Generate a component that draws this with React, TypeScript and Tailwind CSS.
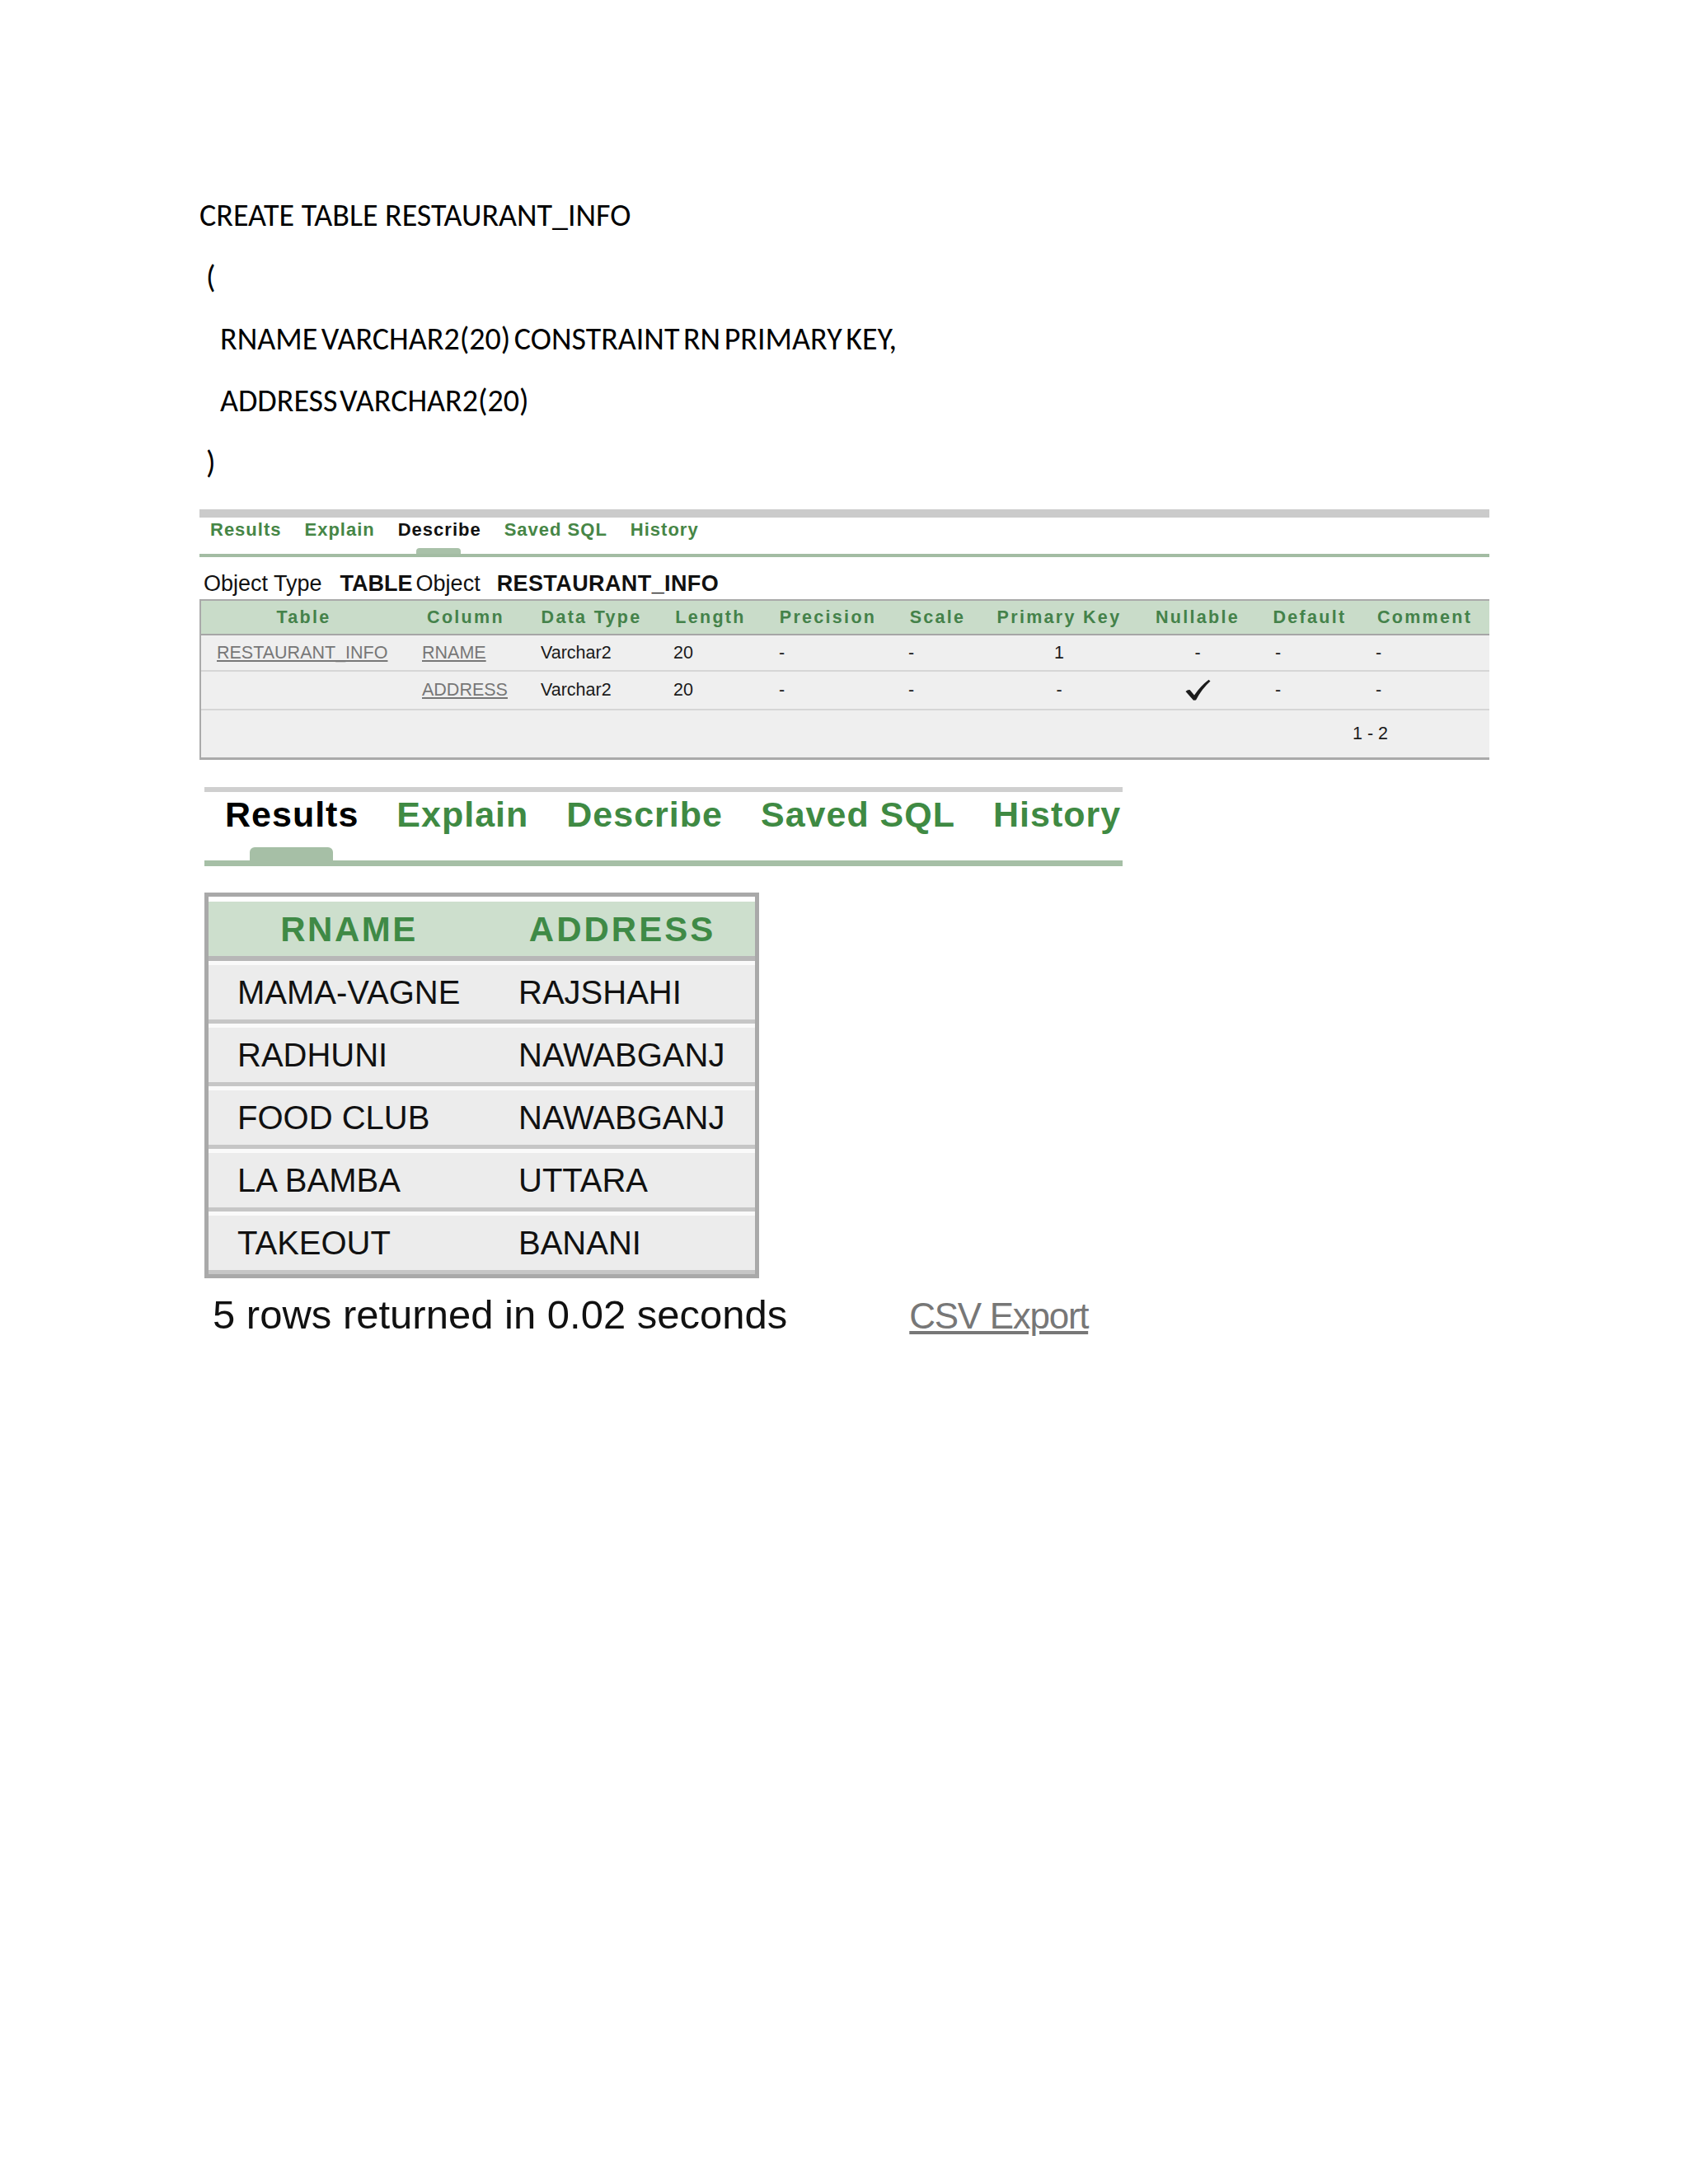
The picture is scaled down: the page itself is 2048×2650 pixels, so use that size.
import React from 'react';

const sans = "font-['Liberation_Sans',Arial,sans-serif]";
const calibri = 'font-[Carlito,Calibri,Lato,sans-serif]';
const descCols = 'grid grid-cols-[249px_144px_161px_128px_157px_109px_186px_150px_122px_157px]';

const describeHead = ['Table', 'Column', 'Data Type', 'Length', 'Precision', 'Scale', 'Primary Key', 'Nullable', 'Default', 'Comment'];

type DescRow = { table: string; column: string; type: string; length: string; pk: string; nullable: boolean };

const descRows: DescRow[] = [
  { table: 'RESTAURANT_INFO', column: 'RNAME', type: 'Varchar2', length: '20', pk: '1', nullable: false },
  { table: '', column: 'ADDRESS', type: 'Varchar2', length: '20', pk: '-', nullable: true },
];

const resultRows = [
  ['MAMA-VAGNE', 'RAJSHAHI'],
  ['RADHUNI', 'NAWABGANJ'],
  ['FOOD CLUB', 'NAWABGANJ'],
  ['LA BAMBA', 'UTTARA'],
  ['TAKEOUT', 'BANANI'],
];

const tabs = ['Results', 'Explain', 'Describe', 'Saved SQL', 'History'];

// heavy hand-drawn style tick used in the Nullable column
const Check = () => (
  <svg width="31" height="27" viewBox="0 0 31 27" className="block">
    <path
      d="M0.5 15 Q3 12.5 5.5 13 L11 19.5 Q18.5 8.5 28.5 0.8 L30.5 2.6 Q20.5 11.5 13 25.5 L10 25.8 Z"
      fill="#1c1c1c"
    />
  </svg>
);

const DescribePanel = () => (
  <div className={`w-[1565px] ${sans}`}>
    <div className="h-[10px] bg-[#cbcbcb]" />
    <div className="flex gap-[28px] whitespace-nowrap pl-[13px] pt-[3px] text-[22px] font-bold leading-[24px] tracking-[1px]">
      {tabs.map((t) => (
        <span key={t} className={t === 'Describe' ? 'text-[#111]' : 'text-[#468646]'}>
          {t}
        </span>
      ))}
    </div>
    <div className="flex h-[17px] items-end">
      <div className="ml-[263px] h-[7px] w-[54px] rounded-t-[4px] bg-[#a9c1a9]" />
    </div>
    <div className="h-[4px] bg-[#a3bca3]" />

    <div className="mt-[17px] flex pl-[5px] text-[27px] leading-[30px] text-[#111]">
      <span>Object Type</span>
      <span className="ml-[22px] font-bold">TABLE</span>
      <span className="ml-[4px]">Object</span>
      <span className="ml-[20px] font-bold tracking-[0.4px]">RESTAURANT_INFO</span>
    </div>

    <div className="mt-[4px] border-t-2 border-b-[3px] border-l-2 border-[#aaaaaa] text-[21.5px]">
      <div className={`${descCols} h-[42px] items-center border-b-2 border-[#a6a6a6] bg-[#c9dcc9]`}>
        {describeHead.map((h) => (
          <div key={h} className="text-center font-bold tracking-[2.3px] text-[#44824a]">
            {h}
          </div>
        ))}
      </div>
      {descRows.map((r, i) => (
        <div
          key={r.column}
          className={`${descCols} ${i === 0 ? 'h-[44px]' : 'h-[47px]'} items-center border-b-2 border-[#d6d6d6] bg-[#efefef] text-[#1a1a1a]`}
        >
          <div className="pl-[19px] text-[#777] underline">{r.table}</div>
          <div className="pl-[19px] text-[#777] underline">{r.column}</div>
          <div className="pl-[19px]">{r.type}</div>
          <div className="pl-[19px]">{r.length}</div>
          <div className="pl-[19px]">-</div>
          <div className="pl-[19px]">-</div>
          <div className="text-center">{r.pk}</div>
          <div className="flex justify-center">{r.nullable ? <Check /> : '-'}</div>
          <div className="pl-[19px]">-</div>
          <div className="pl-[19px]">-</div>
        </div>
      ))}
      <div className="flex h-[57px] items-center bg-[#efefef] pl-[1397px] text-[#1a1a1a]">1 - 2</div>
    </div>
  </div>
);

const ResultsPanel = () => (
  <div className={`mt-[33px] ml-[6px] ${sans}`}>
    <div className="w-[1114px]">
      <div className="h-[6px] bg-[#cfcfcf]" />
      <div className="flex gap-[46px] whitespace-nowrap pl-[25px] pt-[3px] text-[43px] font-bold leading-[48px] tracking-[1px]">
        {tabs.map((t) => (
          <span key={t} className={`shrink-0 ${t === 'Results' ? 'text-black' : 'text-[#3f8a43]'}`}>
            {t}
          </span>
        ))}
      </div>
      <div className="flex h-[32px] items-end">
        <div className="ml-[55px] h-[16px] w-[101px] rounded-t-[6px] bg-[#a6bfa6]" />
      </div>
      <div className="h-[7px] bg-[#a6bfa6]" />
    </div>

    <div className="mt-[32px] w-[673px] border-[5px] border-[#a9a9a9] bg-white">
      <div className="grid h-[78px] grid-cols-[341px_322px] items-center border-t-[6px] border-b-[6px] border-t-white border-b-[#b7b7b7] bg-[#cddfcd] text-[42px] font-bold text-[#3f8a46]">
        <div className="text-center tracking-[2.5px]">RNAME</div>
        <div className="text-center tracking-[3px]">ADDRESS</div>
      </div>
      {resultRows.map(([name, addr], i) => (
        <div
          key={i}
          className="grid h-[76px] grid-cols-[341px_322px] items-center border-t-[5px] border-b-[5px] border-t-[#fafafa] border-b-[#c6c6c6] bg-[#ececec] text-[40px] text-[#111]"
        >
          <div className="pl-[35px]">{name}</div>
          <div className="pl-[35px]">{addr}</div>
        </div>
      ))}
    </div>

    <div className="mt-[16px] flex items-baseline whitespace-nowrap pl-[10px] leading-[56px]">
      <span className="text-[49px] text-[#111]">5 rows returned in 0.02 seconds</span>
      <span className="ml-[148px] text-[44px] tracking-[-1.3px] text-[#777] underline">CSV Export</span>
    </div>
  </div>
);

export default function App() {
  return (
    <div className="min-h-[2650px] w-[2048px] bg-white">
      <div className="pl-[242px] pt-[224px]">
        <div className={`${calibri} text-[38px] leading-[75px] text-black`}>
          <div>CREATE TABLE RESTAURANT_INFO</div>
          <div className="pl-[8px]">(</div>
          <div className="pl-[25px] [word-spacing:-4px]">RNAME VARCHAR2(20) CONSTRAINT RN PRIMARY KEY,</div>
          <div className="pl-[25px] [word-spacing:-6px]">ADDRESS VARCHAR2(20)</div>
          <div className="pl-[8px]">)</div>
        </div>
        <div className="mt-[19px]">
          <DescribePanel />
        </div>
        <ResultsPanel />
      </div>
    </div>
  );
}
